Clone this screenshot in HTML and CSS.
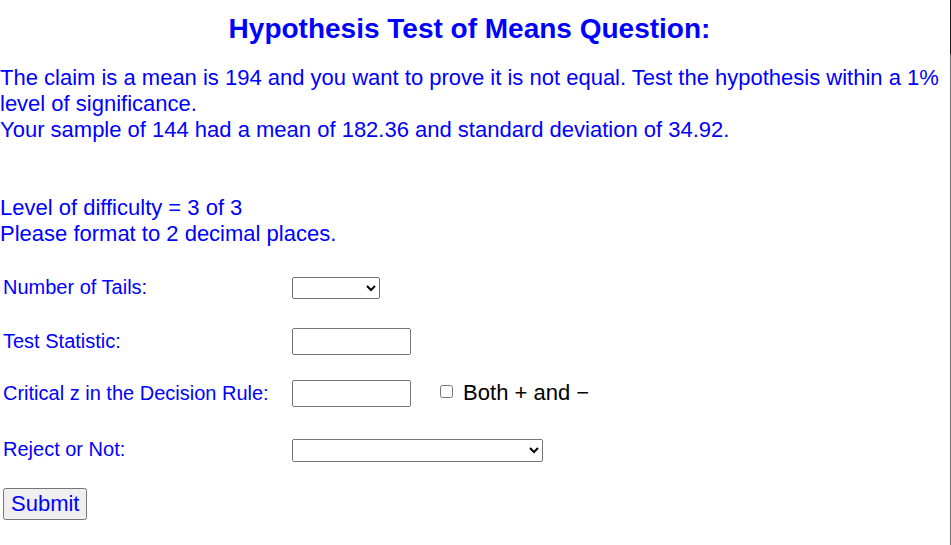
FILE: index.html
```html
<!doctype html>
<html>
<head>
  <title>Hypothesis Test of Means Question</title>
  <link rel="stylesheet" href="styles.css">
</head>
<body>
  <div class="page">
    <h2 class="title">Hypothesis Test of Means Question:</h2>
    <p class="question">The claim is a mean is 194 and you want to prove it is not equal. Test the hypothesis within a 1% level of significance.<br>
      Your sample of 144 had a mean of 182.36 and standard deviation of 34.92.</p>
    <p class="question info">Level of difficulty = 3 of 3<br>
      Please format to 2 decimal places.</p>
    <form>
      <table class="answers">
        <tr>
          <td class="label">Number of Tails:</td>
          <td><select class="tails"><option></option><option>1</option><option>2</option></select></td>
        </tr>
        <tr>
          <td class="label">Test Statistic:</td>
          <td><input type="text" class="num"></td>
        </tr>
        <tr class="short">
          <td class="label">Critical z in the Decision Rule:</td>
          <td><input type="text" class="num"><label class="both"><input type="checkbox"> Both + and &minus;</label></td>
        </tr>
        <tr class="tall">
          <td class="label">Reject or Not:</td>
          <td><select class="reject"><option></option><option>Reject the null hypothesis</option><option>Do not reject the null hypothesis</option></select></td>
        </tr>
      </table>
      <button type="button" class="submit">Submit</button>
    </form>
  </div>
</body>
</html>
```

FILE: styles.css
```css
html, body { margin: 0; padding: 0; background: #fff; }
body {
  font-family: "Liberation Sans", Arial, sans-serif;
  color: #0000ff;
}
.page {
  width: 951px;
  height: 545px;
  box-sizing: border-box;
  border-right: 1px solid #707070;
  border-image: linear-gradient(#1c1c1c 55px, #707070 55px) 1;
}
.title {
  font-size: 28px;
  text-align: center;
  margin: 0 11px 0 0;
  padding-top: 13px;
  line-height: 32px;
}
.question {
  font-size: 22px;
  line-height: 26px;
  margin: 20px 0 0 0;
}
.info { margin-top: 52px; }
.answers {
  margin-top: 12px;
  border-spacing: 2px;
  font-size: 20px;
}
.answers td {
  padding: 1px;
  height: 50px;
  vertical-align: middle;
}
.answers .short td { height: 46px; }
.answers .tall td { height: 58px; }
.answers td.label { width: 285px; }
.tails { width: 88px; height: 22px; }
.reject { width: 251px; height: 23px; }
.num {
  width: 119px;
  height: 27px;
  box-sizing: border-box;
  margin: 0;
  vertical-align: middle;
}
.both {
  color: #000;
  font-size: 22px;
  margin-left: 29px;
  vertical-align: middle;
}
.both input { margin: 0 4px 0 0; vertical-align: 2px; }
.submit {
  font-family: "Liberation Sans", Arial, sans-serif;
  font-size: 22px;
  color: #0000ff;
  margin: 7px 0 0 3px;
  padding: 0 6px;
  height: 32px;
}
```
